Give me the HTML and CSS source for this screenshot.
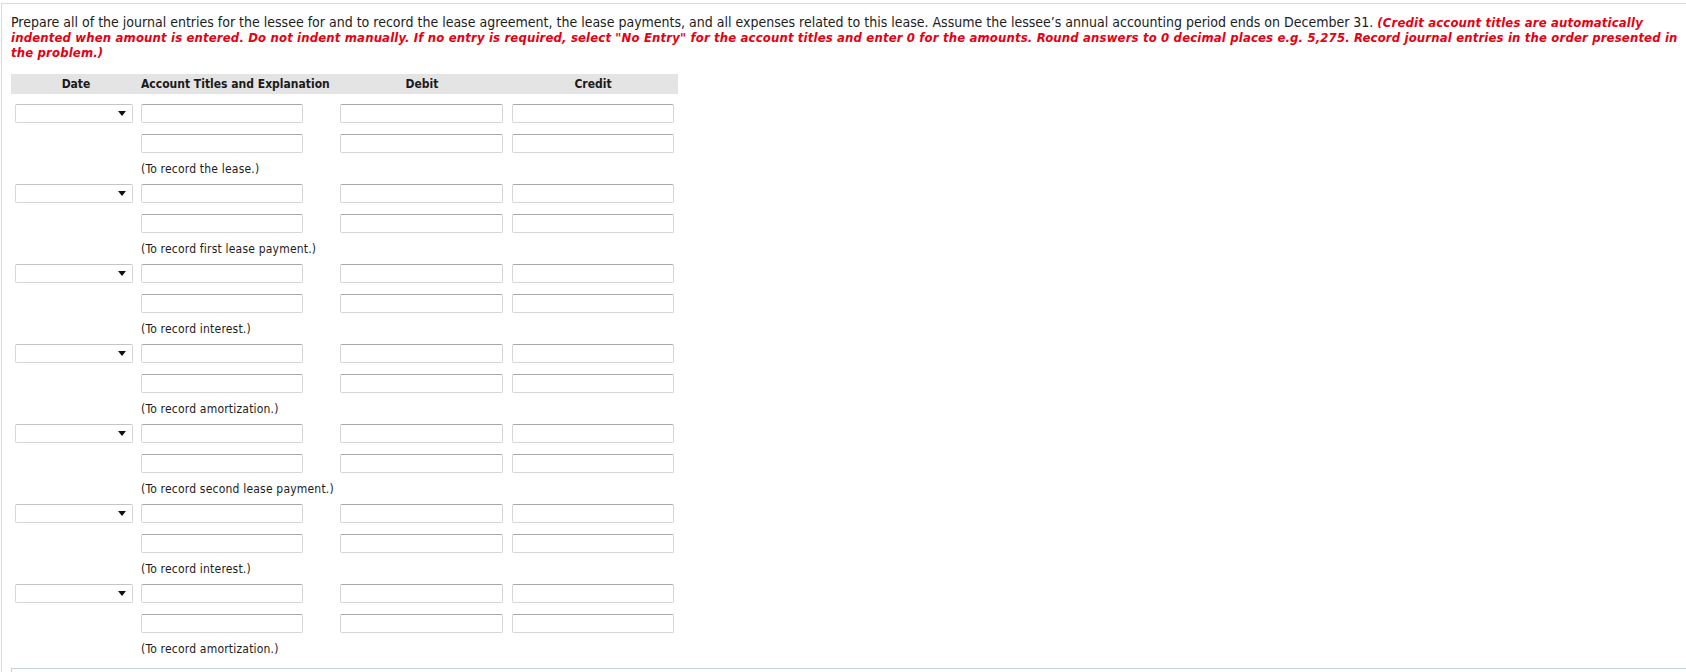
FILE: index.html
```html
<!DOCTYPE html>
<html lang="en">
<head>
<meta charset="utf-8">
<title>Journal entries</title>
<link rel="stylesheet" href="styles.css">
</head>
<body>
<div class="frame">
  <p class="prompt">Prepare all of the journal entries for the lessee for and to record the lease agreement, the lease payments, and all expenses related to this lease. Assume the lessee’s annual accounting period ends on December 31. <em class="note">(Credit account titles are automatically indented when amount is entered. Do not indent manually. If no entry is required, select "No Entry" for the account titles and enter 0 for the amounts. Round answers to 0 decimal places e.g. 5,275. Record journal entries in the order presented in the problem.)</em></p>

  <div class="journal">
    <div class="head">
      <div class="h-date">Date</div>
      <div class="h-acct">Account Titles and Explanation</div>
      <div class="h-num">Debit</div>
      <div class="h-num">Credit</div>
    </div>

    <div class="group">
      <div class="date"><select aria-label="Date"></select><span class="arrow"></span></div>
      <input class="acct" type="text"><input class="amt debit" type="text"><input class="amt credit" type="text">
      <div class="blank"></div>
      <input class="acct" type="text"><input class="amt debit" type="text"><input class="amt credit" type="text">
      <div class="blank"></div>
      <div class="caption">(To record the lease.)</div>
    </div>

    <div class="group">
      <div class="date"><select aria-label="Date"></select><span class="arrow"></span></div>
      <input class="acct" type="text"><input class="amt debit" type="text"><input class="amt credit" type="text">
      <div class="blank"></div>
      <input class="acct" type="text"><input class="amt debit" type="text"><input class="amt credit" type="text">
      <div class="blank"></div>
      <div class="caption">(To record first lease payment.)</div>
    </div>

    <div class="group">
      <div class="date"><select aria-label="Date"></select><span class="arrow"></span></div>
      <input class="acct" type="text"><input class="amt debit" type="text"><input class="amt credit" type="text">
      <div class="blank"></div>
      <input class="acct" type="text"><input class="amt debit" type="text"><input class="amt credit" type="text">
      <div class="blank"></div>
      <div class="caption">(To record interest.)</div>
    </div>

    <div class="group">
      <div class="date"><select aria-label="Date"></select><span class="arrow"></span></div>
      <input class="acct" type="text"><input class="amt debit" type="text"><input class="amt credit" type="text">
      <div class="blank"></div>
      <input class="acct" type="text"><input class="amt debit" type="text"><input class="amt credit" type="text">
      <div class="blank"></div>
      <div class="caption">(To record amortization.)</div>
    </div>

    <div class="group">
      <div class="date"><select aria-label="Date"></select><span class="arrow"></span></div>
      <input class="acct" type="text"><input class="amt debit" type="text"><input class="amt credit" type="text">
      <div class="blank"></div>
      <input class="acct" type="text"><input class="amt debit" type="text"><input class="amt credit" type="text">
      <div class="blank"></div>
      <div class="caption">(To record second lease payment.)</div>
    </div>

    <div class="group">
      <div class="date"><select aria-label="Date"></select><span class="arrow"></span></div>
      <input class="acct" type="text"><input class="amt debit" type="text"><input class="amt credit" type="text">
      <div class="blank"></div>
      <input class="acct" type="text"><input class="amt debit" type="text"><input class="amt credit" type="text">
      <div class="blank"></div>
      <div class="caption">(To record interest.)</div>
    </div>

    <div class="group">
      <div class="date"><select aria-label="Date"></select><span class="arrow"></span></div>
      <input class="acct" type="text"><input class="amt debit" type="text"><input class="amt credit" type="text">
      <div class="blank"></div>
      <input class="acct" type="text"><input class="amt debit" type="text"><input class="amt credit" type="text">
      <div class="blank"></div>
      <div class="caption">(To record amortization.)</div>
    </div>
  </div>

  <div class="next"></div>
</div>
</body>
</html>
```

FILE: styles.css
```css
html, body {
  margin: 0;
  padding: 0;
  background: #ffffff;
}

body {
  font-family: "DejaVu Sans Condensed", "DejaVu Sans", sans-serif;
  font-size: 13px;
  color: #1c1c1c;
  overflow: hidden;
  height: 672px;
}

.frame {
  margin: 3px 0 0 1px;
  border-top: 1px solid #d3dbe5;
  border-left: 1px solid #d3dbe5;
  padding: 11px 0 0 9px;
  min-height: 700px;
}

.prompt {
  margin: 0;
  font-size: 14px;
  line-height: 15px;
  padding-right: 8px;
}

.note {
  color: #e60012;
  font-weight: bold;
  font-style: italic;
  font-size: 13px;
  letter-spacing: 0.15px;
}

.journal {
  margin-top: 14px;
  width: 667px;
}

.head,
.group {
  display: grid;
  grid-template-columns: 130px 199px 172px 166px;
}

.head {
  height: 20px;
  background: #e4e4e4;
  font-weight: bold;
  font-size: 12px;
  line-height: 20px;
  color: #1a1a1a;
}

.h-date {
  text-align: center;
  padding-left: 4px;
  padding-right: 4px;
}

.h-acct {
  padding-left: 0;
}

.h-num {
  text-align: center;
  padding-right: 8px;
}

.h-num:last-child {
  padding-right: 4px;
}

.group {
  margin-top: 10px;
  row-gap: 11px;
  grid-template-rows: 19px 19px auto;
}

.group + .group {
  margin-top: 7px;
}

.date {
  position: relative;
  margin-left: 4px;
  width: 118px;
  height: 19px;
}

.date select {
  appearance: none;
  -webkit-appearance: none;
  box-sizing: border-box;
  width: 118px;
  height: 19px;
  margin: 0;
  border: 1px solid #d6d6d6;
  border-top-color: #c4c4c4;
  border-radius: 2px;
  background: #ffffff;
}

.arrow {
  position: absolute;
  right: 7px;
  top: 7px;
  width: 0;
  height: 0;
  border-left: 4px solid transparent;
  border-right: 4px solid transparent;
  border-top: 5px solid #111111;
}

input {
  box-sizing: border-box;
  height: 19px;
  margin: 0;
  padding: 0 3px;
  border: 1px solid #d6d6d6;
  border-top-color: #a8a8a8;
  border-radius: 2px;
  background: #ffffff;
  font: inherit;
}

.acct {
  width: 162px;
}

.debit {
  width: 163px;
}

.credit {
  width: 162px;
}

.caption {
  grid-column: 2 / 5;
  margin-top: -2px;
  font-size: 12px;
  line-height: 15px;
  color: #1c1c1c;
  letter-spacing: 0.2px;
}

.next {
  margin-top: 11px;
  margin-left: 0;
  border-top: 1px solid #c8d2dd;
  border-left: 1px solid #c8d2dd;
  height: 40px;
}
```
